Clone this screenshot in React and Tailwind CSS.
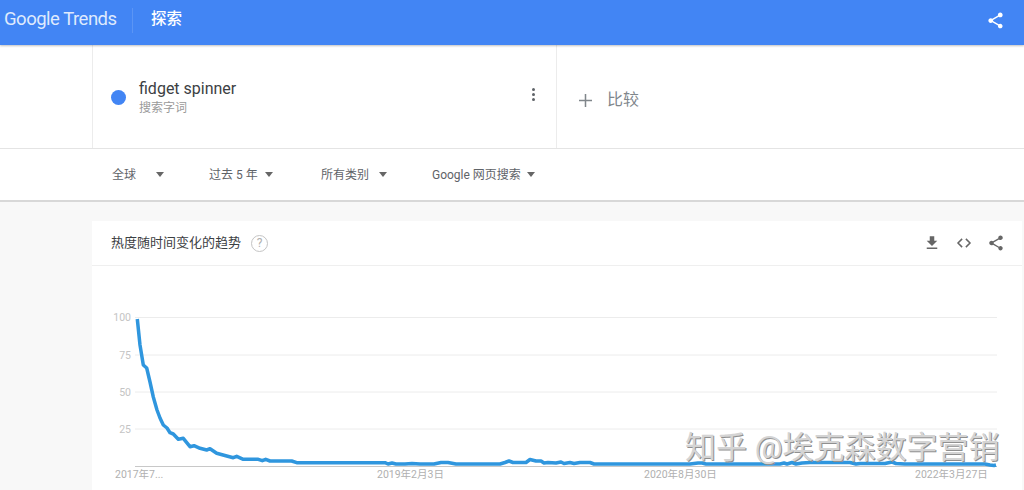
const font = { fontFamily: '"Roboto", "Noto Sans CJK SC", sans-serif' };

const linePoints =
  "137.3,319 140,345 143.3,365 146.7,368 150,382 153.3,397 157,410 160,418 163.3,425 167,428 170,432.7 173.3,434 178.3,439.3 183.3,438.3 190,446.7 194,445.7 200,448.3 206.7,450 210,448.7 216.7,453.3 226.7,456 233.3,457.7 236.7,456.3 243.3,459.3 258.3,459.3 262.3,460.7 265.7,459.3 270,461 291.7,461 296.7,462.7 385,462.7 388,464 392,463 396,464 405,464 412,463.5 420,464 434,464 441,462.5 448,462.5 456,464 500,464 505,462.5 509,461 513,462.5 526,462.5 530,459.5 536,461 541,461 544,463 548,462.5 556,463 561,462 564,463.5 570,462.5 574,463.5 580,462.5 590,462.5 594,464 690,464 698,463 702,463 706,464 780,464 784,463 787,464 792,462.5 796,464 802,463 810,462.5 850,462.5 856,464 860,463.5 885,463.5 892,462 896,463.5 905,464 985,464 990,465 994,465.5 996,465";

const ShareIcon = ({ className }) => (
  <svg viewBox="0 0 24 24" className={className} fill="currentColor">
    <path d="M18 16.08c-.76 0-1.44.3-1.96.77L8.91 12.7c.05-.23.09-.46.09-.7s-.04-.47-.09-.7l7.05-4.11c.54.5 1.25.81 2.04.81 1.66 0 3-1.34 3-3s-1.34-3-3-3-3 1.34-3 3c0 .24.04.47.09.7L8.04 9.81C7.5 9.31 6.79 9 6 9c-1.66 0-3 1.34-3 3s1.34 3 3 3c.79 0 1.5-.31 2.04-.81l7.12 4.16c-.05.21-.08.43-.08.65 0 1.61 1.31 2.92 2.92 2.92s2.92-1.31 2.92-2.92-1.31-2.92-2.92-2.92z" />
  </svg>
);

const Caret = () => <span className="w-0 h-0 border-x-[4.5px] border-x-transparent border-t-[5px] border-t-[#666]" />;

const FilterItem = ({ label, width, gap }) => (
  <div className={`flex items-center text-[12px] text-[#5f6368] ${width} ${gap}`}>
    <span>{label}</span>
    <Caret />
  </div>
);

export default function App() {
  return (
    <div className="relative w-[1024px] h-[490px] overflow-hidden bg-[#f8f8f8]" style={font}>
      {/* top bar */}
      <header className="h-[45px] bg-[#4285f4] flex items-center pl-[4px] pr-[19px] pb-[5px] text-white shadow-[0_1px_2px_rgba(0,0,0,0.25)] relative">
        <span className="text-[18.5px] tracking-[-0.5px] w-[128px] text-[#dfeafd]">Google Trends</span>
        <div className="w-px h-[25px] bg-[#5b95f5]" />
        <span className="ml-[18px] text-[15.5px] font-medium">探索</span>
        <ShareIcon className="ml-auto w-[19px] h-[19px]" />
      </header>

      {/* search term row */}
      <div className="h-[104px] bg-white flex pl-[92px] border-b border-[#e4e4e4]">
        <div className="w-[465px] border-x border-[#ececec] flex items-center pl-[18px] pr-[21px]">
          <span className="w-[15px] h-[15px] rounded-full bg-[#4285f4] mt-[1px]" />
          <div className="ml-[13px] mt-[3px]">
            <div className="text-[16px] leading-[18px] text-[#3c4043]">fidget spinner</div>
            <div className="text-[12px] leading-[16px] mt-[2px] text-[#9a9a9a]">搜索字词</div>
          </div>
          <div className="ml-auto flex flex-col gap-[1.5px] mt-[-4px]">
            <span className="w-[3.5px] h-[3.5px] rounded-full bg-[#5f6368]" />
            <span className="w-[3.5px] h-[3.5px] rounded-full bg-[#5f6368]" />
            <span className="w-[3.5px] h-[3.5px] rounded-full bg-[#5f6368]" />
          </div>
        </div>
        <div className="flex items-center pl-[22px] pt-[7px] text-[#80868b]">
          <svg viewBox="0 0 12 12" className="w-[13px] h-[13px]" stroke="currentColor" strokeWidth="1.4">
            <path d="M6 0v12M0 6h12" />
          </svg>
          <span className="ml-[15px] text-[16px]">比较</span>
        </div>
      </div>

      {/* filters */}
      <div className="h-[53px] bg-white flex items-center pl-[112px] border-b-2 border-[#d8d8d8]">
        <FilterItem label="全球" width="w-[97px]" gap="gap-[20px]" />
        <FilterItem label="过去 5 年" width="w-[112px]" gap="gap-[7px]" />
        <FilterItem label="所有类别" width="w-[111px]" gap="gap-[10px]" />
        <FilterItem label="Google 网页搜索" width="w-auto" gap="gap-[6px]" />
      </div>

      {/* chart card */}
      <section className="mt-[19px] ml-[92px] w-[930px] bg-white h-[269px] flex flex-col">
        <div className="h-[45px] shrink-0 flex items-center pl-[19px] pr-[17px] border-b border-[#efefef]">
          <span className="text-[13px] text-[#3c4043]">热度随时间变化的趋势</span>
          <span className="ml-[10px] w-[17px] h-[17px] rounded-full border-[1.5px] border-[#c4c4c4] text-[#b0b0b0] text-[12px] leading-[14px] text-center">?</span>
          <div className="ml-auto flex items-center text-[#666] gap-[14px]">
            <svg viewBox="0 0 24 24" className="w-[18px] h-[18px]" fill="currentColor">
              <path d="M19 9h-4V3H9v6H5l7 7 7-7zM5 18v2h14v-2H5z" />
            </svg>
            <svg viewBox="0 0 24 24" className="w-[18px] h-[18px]" fill="none" stroke="currentColor" strokeWidth="2">
              <path d="M9.5 6.5 4 12l5.5 5.5M14.5 6.5 20 12l-5.5 5.5" />
            </svg>
            <ShareIcon className="w-[18px] h-[18px]" />
          </div>
        </div>
        <svg viewBox="92 266 930 224" className="w-[930px] h-[224px] shrink-0">
          {[317.5, 355, 392, 429].map((y) => (
            <line key={y} x1="135" x2="997" y1={y} y2={y} stroke="#ececec" />
          ))}
          <line x1="135" x2="997" y1="466.5" y2="466.5" stroke="#c8c8c8" />
          {[["100", 321], ["75", 358.5], ["50", 396], ["25", 433]].map(([t, y]) => (
            <text key={t} x="131" y={y} textAnchor="end" fontSize="10.5" fill="#c4c4c4">{t}</text>
          ))}
          <polyline points={linePoints} fill="none" stroke="#2f96de" strokeWidth="3.5" strokeLinejoin="round" />
          {[["2017年7...", 115], ["2019年2月3日", 377], ["2020年8月30日", 644], ["2022年3月27日", 915]].map(([t, x]) => (
            <text key={t} x={x} y="478" fontSize="10.5" fill="#b0b0b0">{t}</text>
          ))}
        </svg>
      </section>

      {/* watermark */}
      <div className="absolute left-[685px] top-[430px] text-[31px] leading-[36px] text-[#d4d4d4] whitespace-nowrap [text-shadow:1px_1px_0_#8f8f8f]">
        知乎 @埃克森数字营销
      </div>
    </div>
  );
}
